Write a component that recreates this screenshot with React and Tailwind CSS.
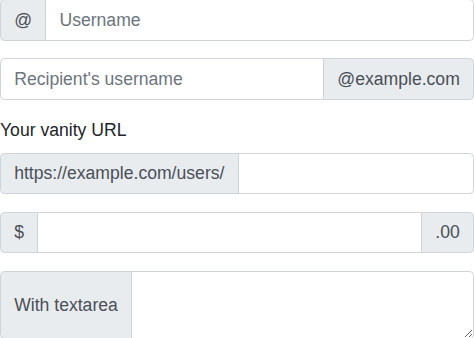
const font = { fontFamily: '"Liberation Sans", Arial, sans-serif' };

function Addon({ children, side }) {
  const round = side === 'left' ? 'rounded-l-[4.4px] -mr-px' : 'rounded-r-[4.4px] -ml-px';
  return (
    <span
      className={`flex items-center px-[13.2px] py-[6.6px] bg-[#e9ecef] border border-[#ced4da] text-[#495057] text-[17.6px] leading-[26.4px] whitespace-nowrap ${round}`}
    >
      {children}
    </span>
  );
}

function Input({ placeholder, rounded }) {
  return (
    <input
      type="text"
      placeholder={placeholder}
      className={`flex-1 min-w-0 px-[13.2px] py-[6.6px] bg-white border border-[#ced4da] text-[#495057] text-[17.6px] leading-[26.4px] placeholder:text-[#6c757d] outline-none ${rounded}`}
    />
  );
}

export default function App() {
  return (
    <div className="w-[474px] -mt-px text-[#212529]" style={font}>
      <div className="flex w-full mb-[17.6px]">
        <Addon side="left">@</Addon>
        <Input placeholder="Username" rounded="rounded-r-[4.4px]" />
      </div>

      <div className="flex w-full mb-[17.6px]">
        <Input placeholder="Recipient's username" rounded="rounded-l-[4.4px]" />
        <Addon side="right">@example.com</Addon>
      </div>

      <label className="block mb-[8.8px] text-[17.6px] leading-[26.4px]">Your vanity URL</label>
      <div className="flex w-full mb-[17.6px]">
        <Addon side="left">https://example.com/users/</Addon>
        <Input placeholder="" rounded="rounded-r-[4.4px]" />
      </div>

      <div className="flex w-full mb-[17.6px]">
        <Addon side="left">$</Addon>
        <Input placeholder="" rounded="rounded-none" />
        <Addon side="right">.00</Addon>
      </div>

      <div className="flex w-full">
        <Addon side="left">With textarea</Addon>
        <textarea
          rows={2}
          className="flex-1 min-w-0 px-[13.2px] py-[6.6px] bg-white border border-[#ced4da] text-[#495057] text-[17.6px] leading-[26.4px] rounded-r-[4.4px] outline-none"
        />
      </div>
    </div>
  );
}
